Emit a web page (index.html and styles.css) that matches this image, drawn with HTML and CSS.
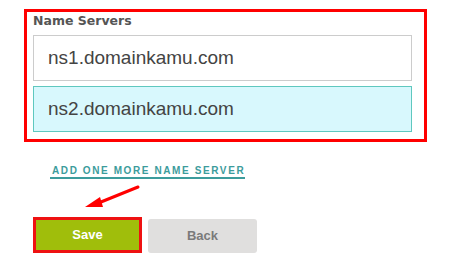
FILE: index.html
```html
<!DOCTYPE html>
<html>
<head>
<meta charset="utf-8">
<link rel="stylesheet" href="styles.css">
</head>
<body>
<div class="page">
  <div class="box">
    <div class="title">Name Servers</div>
    <div class="field">ns1.domainkamu.com</div>
    <div class="field active">ns2.domainkamu.com</div>
  </div>
  <div class="link-row"><a class="add-link">ADD ONE MORE NAME SERVER</a></div>
  <div class="buttons">
    <div class="btn save">Save</div>
    <div class="btn back">Back</div>
  </div>
  <svg class="arrow" width="60" height="30" viewBox="0 0 60 30">
    <line x1="54" y1="2" x2="12" y2="19" stroke="#ff0000" stroke-width="3" stroke-linecap="round"/>
    <polygon points="1,22 16,12 19,22" fill="#ff0000"/>
  </svg>
</div>
</body>
</html>
```
FILE: styles.css
```css
html, body {
  margin: 0;
  padding: 0;
  background: #ffffff;
}
.page {
  position: relative;
  width: 475px;
  height: 256px;
  padding: 9px 0 0 24px;
  box-sizing: border-box;
  font-family: "Liberation Sans", Arial, sans-serif;
}
.box {
  width: 403px;
  box-sizing: border-box;
  border: 3px solid #ff0000;
  padding: 1px 12px 7px 6px;
}
.title {
  font-family: "DejaVu Sans", Verdana, sans-serif;
  font-size: 12.5px;
  font-weight: bold;
  line-height: 16px;
  color: #555555;
  margin-bottom: 6px;
}
.field {
  height: 46px;
  box-sizing: border-box;
  border: 1px solid #cccccc;
  background: #ffffff;
  padding-left: 14px;
  font-size: 19px;
  line-height: 43px;
  color: #444444;
}
.field.active {
  margin-top: 5px;
  border-color: #5fc8bf;
  background: #d8f8fd;
}
.link-row {
  margin-top: 18px;
  padding-left: 26px;
  height: 14px;
}
.add-link {
  display: inline-block;
  font-size: 10px;
  font-weight: bold;
  letter-spacing: 1.6px;
  line-height: 12px;
  color: #3c9c9c;
  border-bottom: 2px solid #3c9c9c;
  padding: 0 0 0 2px;
}
.buttons {
  display: flex;
  align-items: flex-start;
  margin-top: 43px;
  margin-left: 9px;
  gap: 6px;
}
.btn {
  width: 109px;
  box-sizing: border-box;
  text-align: center;
  font-weight: bold;
  font-size: 13px;
}
.save {
  height: 36px;
  border: 3px solid #ee1111;
  background: #a0be0b;
  color: #ffffff;
  line-height: 30px;
}
.back {
  height: 34px;
  margin-top: 2px;
  background: #e0dfde;
  border-radius: 3px;
  color: #7a7a7a;
  line-height: 34px;
}
.arrow {
  position: absolute;
  left: 84px;
  top: 185px;
}
```
